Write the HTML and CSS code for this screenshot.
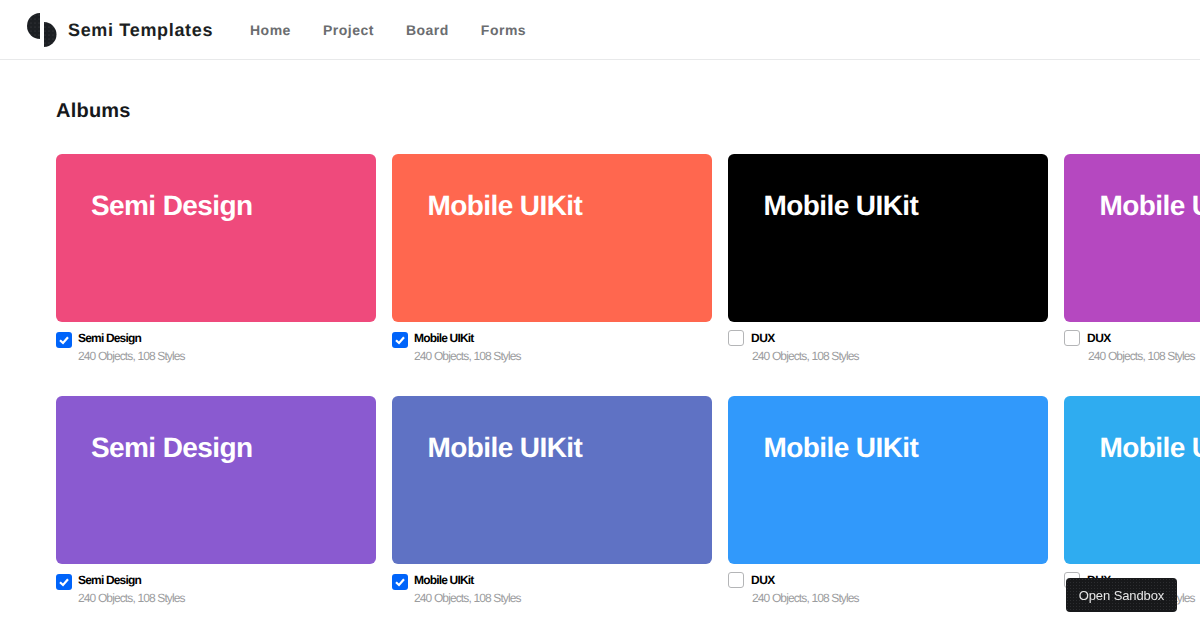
FILE: index.html
```html
<!DOCTYPE html>
<html lang="en">
<head>
<meta charset="utf-8">
<title>Semi Templates</title>
<link rel="stylesheet" href="styles.css">
</head>
<body>
<header class="topbar">
  <div class="brand">
    <svg class="logo" width="32" height="40" viewBox="0 0 32 40">
      <defs>
        <pattern id="dots" width="4" height="4" patternUnits="userSpaceOnUse">
          <rect width="4" height="4" fill="#1c1f23"/>
          <circle cx="1" cy="1" r="0.5" fill="#4a4c50"/>
        </pattern>
      </defs>
      <path d="M14 3V29A13 13 0 0 1 14 3Z" fill="url(#dots)"/>
      <path d="M18 12V37A12.500 12.500 0 0 1 18 12Z" fill="url(#dots)" transform="matrix(-1 0 0 1 36 0)"/>
    </svg>
    <span class="brand-name">Semi Templates</span>
  </div>
  <nav class="nav">
    <a class="nav-link">Home</a>
    <a class="nav-link">Project</a>
    <a class="nav-link">Board</a>
    <a class="nav-link">Forms</a>
  </nav>
</header>
<main class="content">
  <h1 class="heading">Albums</h1>
  <section class="grid">
    <article class="album">
      <div class="cover pink">Semi Design</div>
      <div class="meta"><span class="check on"><svg width="16" height="16" viewBox="0 0 16 16"><path d="M4 8.200 7 11 12 5.300" fill="none" stroke="#fff" stroke-width="2.200"/></svg></span>
        <div class="info"><div class="name tight">Semi Design</div><div class="sub">240 Objects, 108 Styles</div></div></div>
    </article>
    <article class="album">
      <div class="cover orange">Mobile UIKit</div>
      <div class="meta"><span class="check on"><svg width="16" height="16" viewBox="0 0 16 16"><path d="M4 8.200 7 11 12 5.300" fill="none" stroke="#fff" stroke-width="2.200"/></svg></span>
        <div class="info"><div class="name tight">Mobile UIKit</div><div class="sub">240 Objects, 108 Styles</div></div></div>
    </article>
    <article class="album">
      <div class="cover black">Mobile UIKit</div>
      <div class="meta"><span class="check"></span>
        <div class="info"><div class="name dux">DUX</div><div class="sub">240 Objects, 108 Styles</div></div></div>
    </article>
    <article class="album">
      <div class="cover purple">Mobile UIKit</div>
      <div class="meta"><span class="check"></span>
        <div class="info"><div class="name dux">DUX</div><div class="sub">240 Objects, 108 Styles</div></div></div>
    </article>
    <article class="album">
      <div class="cover violet">Semi Design</div>
      <div class="meta"><span class="check on"><svg width="16" height="16" viewBox="0 0 16 16"><path d="M4 8.200 7 11 12 5.300" fill="none" stroke="#fff" stroke-width="2.200"/></svg></span>
        <div class="info"><div class="name tight">Semi Design</div><div class="sub">240 Objects, 108 Styles</div></div></div>
    </article>
    <article class="album">
      <div class="cover indigo">Mobile UIKit</div>
      <div class="meta"><span class="check on"><svg width="16" height="16" viewBox="0 0 16 16"><path d="M4 8.200 7 11 12 5.300" fill="none" stroke="#fff" stroke-width="2.200"/></svg></span>
        <div class="info"><div class="name tight">Mobile UIKit</div><div class="sub">240 Objects, 108 Styles</div></div></div>
    </article>
    <article class="album">
      <div class="cover blue">Mobile UIKit</div>
      <div class="meta"><span class="check"></span>
        <div class="info"><div class="name dux">DUX</div><div class="sub">240 Objects, 108 Styles</div></div></div>
    </article>
    <article class="album">
      <div class="cover sky">Mobile UIKit</div>
      <div class="meta"><span class="check"></span>
        <div class="info"><div class="name dux">DUX</div><div class="sub">240 Objects, 108 Styles</div></div></div>
    </article>
  </section>
</main>
<button class="sandbox">Open Sandbox</button>
</body>
</html>
```
FILE: styles.css
```css
* { box-sizing: border-box; }
html, body { margin: 0; height: 630px; overflow: hidden; background: #fff; }
body { font-family: "Liberation Sans", Arial, sans-serif; color: #1c1f23; width: 1200px; text-rendering: geometricPrecision; }
.topbar { height: 60px; display: flex; align-items: center; padding-left: 26px; border-bottom: 1px solid #e8e9ea; }
.brand { display: flex; align-items: center; width: 224px; }
.logo { flex: none; margin-right: 10px; margin-top: 1px; }
.brand-name { font-size: 18px; font-weight: 700; letter-spacing: 0.67px; white-space: nowrap; padding-top: 1px; }
.nav { display: flex; gap: 32px; }
.nav-link { font-size: 14px; font-weight: 700; color: #6b6d70; letter-spacing: 0.5px; }
.content { padding: 39px 0 0 56px; }
.heading { margin: 0 0 31px; font-size: 20px; line-height: 24px; font-weight: 700; letter-spacing: 0.22px; color: #16181b; }
.grid { display: grid; grid-template-columns: repeat(4, 320px); gap: 16px; row-gap: 0; overflow: hidden; width: 1144px; }
.album { height: 242px; }
.cover { height: 168px; border-radius: 6px; padding: 34px 0 0 35.6px; font-size: 28px; line-height: 36px; font-weight: 700; color: #fff; letter-spacing: -0.6px; white-space: nowrap; overflow: hidden; }
.pink { background: #ef4a7c; padding-left: 35px; }
.orange { background: #ff674f; }
.black { background: #000; }
.purple { background: #b548c0; }
.violet { background: #8a5ad0; padding-left: 35px; }
.indigo { background: #5f72c4; }
.blue { background: #3199fb; }
.sky { background: #2facf0; }
.meta { display: flex; align-items: flex-start; padding-top: 8px; }
.check { flex: none; width: 16px; height: 16px; border: 1px solid #b4b5b7; border-radius: 3px; margin-right: 8px; }
.check.on { border: 0; background: #0064fa; margin-top: 2px; margin-right: 6px; display: block; }
.check svg { display: block; }
.info { font-size: 12px; white-space: nowrap; }
.name { font-weight: 700; color: #000; font-size: 12px; line-height: 16px; }
.tight { letter-spacing: -0.82px; }
.dux { letter-spacing: -0.5px; text-indent: -1px; }
.sub { color: #9b9c9e; font-size: 12px; line-height: 20px; letter-spacing: -0.87px; }
.sandbox { position: fixed; left: 1066px; top: 578px; width: 111px; height: 34px; padding: 0; border: 0; border-radius: 4px; background-color: #17181a; background-image: radial-gradient(#2c2d30 0.6px, transparent 0.7px); background-size: 3px 3px; color: #e6e6e6; font: 13px "Liberation Sans", Arial, sans-serif; letter-spacing: -0.1px; }
```
